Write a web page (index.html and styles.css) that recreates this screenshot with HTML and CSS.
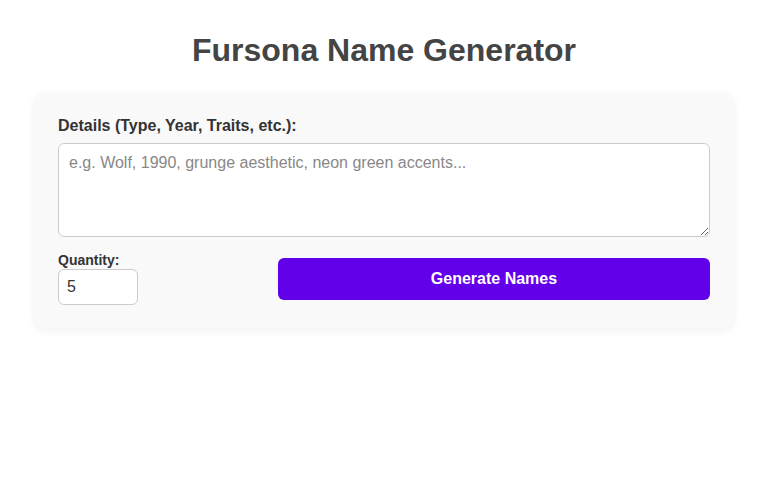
FILE: index.html
```html
<!DOCTYPE html>
<html lang="en">
<head>
    <meta charset="UTF-8">
    <meta name="viewport" content="width=device-width, initial-scale=1.0">
    <title>Fursona Name Generator</title>
    <link rel="stylesheet" href="styles.css">
</head>
<body>
    <h1>Fursona Name Generator</h1>

    <div class="generator-card">
        <label for="details" class="field-label">Details (Type, Year, Traits, etc.):</label>
        <textarea id="details" class="details-input" placeholder="e.g. Wolf, 1990, grunge aesthetic, neon green accents..."></textarea>

        <div class="controls">
            <div class="quantity-group">
                <label for="quantity" class="quantity-label">Quantity:</label>
                <input type="number" id="quantity" class="quantity-input" value="5" min="1" max="20">
            </div>
            <button class="generate-button">Generate Names</button>
        </div>
    </div>
</body>
</html>
```

FILE: styles.css
```css
body {
    font-family: "Liberation Sans", Arial, sans-serif;
    background-color: #fff;
    color: #333;
    margin: 0;
    padding: 32px 20px;
}

h1 {
    text-align: center;
    color: #444;
    font-size: 32px;
    margin: 0 0 24px;
}

.generator-card {
    max-width: 652px;
    margin: 0 auto;
    padding: 24px;
    background-color: #f9f9f9;
    border-radius: 12px;
    box-shadow: 0 2px 8px rgba(0, 0, 0, 0.06);
}

.field-label {
    display: block;
    font-weight: bold;
    font-size: 16px;
    margin-bottom: 8px;
}

.details-input {
    display: block;
    width: 100%;
    height: 94px;
    box-sizing: border-box;
    padding: 10px;
    font-family: inherit;
    font-size: 16px;
    color: #333;
    border: 1px solid #ccc;
    border-radius: 6px;
    margin: 0 0 15px;
}

.details-input::placeholder {
    color: #888;
}

.controls {
    display: flex;
    align-items: center;
    gap: 20px;
}

.quantity-group {
    width: 200px;
}

.quantity-label {
    display: block;
    font-weight: bold;
    font-size: 14px;
    margin-bottom: 1px;
}

.quantity-input {
    width: 80px;
    height: 36px;
    box-sizing: border-box;
    padding: 8px;
    font-family: inherit;
    font-size: 16px;
    color: #333;
    border: 1px solid #ccc;
    border-radius: 6px;
    background-color: #fff;
}

.generate-button {
    flex: 1;
    height: 42px;
    background-color: #6200ea;
    color: #fff;
    border: none;
    border-radius: 6px;
    font-family: inherit;
    font-size: 16px;
    font-weight: bold;
    cursor: pointer;
}

.generate-button:hover {
    background-color: #5000c0;
}
```
